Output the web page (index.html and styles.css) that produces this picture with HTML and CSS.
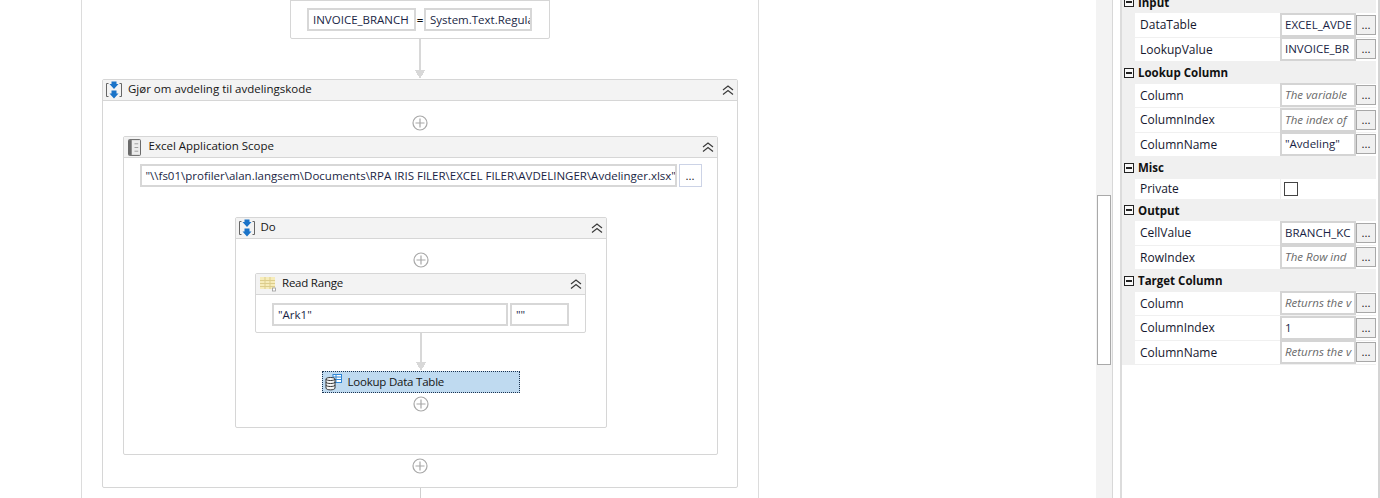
FILE: index.html
```html
<!DOCTYPE html>
<html lang="no">
<head>
<meta charset="utf-8">
<title>Workflow designer</title>
<link rel="stylesheet" href="styles.css">
</head>
<body>
<svg class="defs" width="0" height="0" aria-hidden="true">
  <defs>
    <symbol id="seq" viewBox="0 0 18 18">
      <path d="M3.500 2.500H1.500V15.500H3.500M14.500 2.500H16.500V15.500H14.500" fill="none" stroke="#666" stroke-width="1"/>
      <path d="M6.500 0.500H11.500V3H13.500L9 8L4.500 3H6.500Z" fill="#1a73c8"/>
      <path d="M6.500 9.500H11.500V12.500H13.500L9 17.500L4.500 12.500H6.500Z" fill="#1a73c8"/>
    </symbol>
    <symbol id="chev" viewBox="0 0 12 10">
      <path d="M1 5L6 1L11 5M1 9.500L6 5.500L11 9.500" fill="none" stroke="#3a3a3a" stroke-width="1.200"/>
    </symbol>
    <symbol id="plus" viewBox="0 0 16 16">
      <circle cx="8" cy="8" r="7" fill="#fff" stroke="#a8a8a8" stroke-width="1.200"/>
      <path d="M8 3.500V12.500M3.500 8H12.500" stroke="#a8a8a8" stroke-width="1.200"/>
    </symbol>
    <symbol id="book" viewBox="0 0 14 18">
      <rect x="0.500" y="0.500" width="13" height="17" rx="1" fill="#ececec" stroke="#5a5a5a"/>
      <rect x="1" y="1" width="3" height="16" fill="#6a6a6a"/>
      <path d="M7 5H11M7 9H11M7 13H11" stroke="#999"/>
    </symbol>
    <symbol id="range" viewBox="0 0 16 16">
      <rect x="0" y="1" width="15" height="12" fill="#f6ecba"/>
      <path d="M0 4.500H15M0 7.500H15M0 10.500H15M5 1V13M10 1V13" stroke="#dccd8c"/>
      <rect x="12.500" y="12" width="3" height="3" fill="#fff" stroke="#999" stroke-width="0.800"/>
    </symbol>
    <symbol id="lookup" viewBox="0 0 17 17">
      <rect x="8" y="0.500" width="8.500" height="8" fill="#fff" stroke="#2f86d6"/>
      <path d="M8 3H16.500M8 5.500H16.500M11 0.500V8.500" stroke="#2f86d6"/>
      <path d="M1 5C1 3 10 3 10 5V14C10 16.500 1 16.500 1 14Z" fill="#f6f6f6" stroke="#333"/>
      <path d="M1 5C1 7 10 7 10 5M1 8C1 10 10 10 10 8M1 11C1 13 10 13 10 11" fill="none" stroke="#333"/>
    </symbol>
  </defs>
</svg>

<div class="gutter"></div>

<main class="canvas">
  <section class="act assign">
    <div class="head head-cut"></div>
    <div class="assign-body">
      <span class="field f-to">INVOICE_BRANCH</span>
      <span class="eq">=</span>
      <span class="field f-val">System.Text.Regula</span>
    </div>
  </section>
  <div class="conn conn-a"><span class="arrow"></span></div>

  <section class="act outer">
    <header class="head">
      <svg class="ico i-seq"><use href="#seq"/></svg>
      <span class="title">Gjør om avdeling til avdelingskode</span>
      <svg class="chev"><use href="#chev"/></svg>
    </header>
    <div class="body body-outer">
      <svg class="plus p-top"><use href="#plus"/></svg>

      <section class="act excel">
        <header class="head">
          <svg class="ico i-book"><use href="#book"/></svg>
          <span class="title">Excel Application Scope</span>
          <svg class="chev"><use href="#chev"/></svg>
        </header>
        <div class="body body-excel">
          <div class="path-row">
            <span class="field f-path">"\\fs01\profiler\alan.langsem\Documents\RPA IRIS FILER\EXCEL FILER\AVDELINGER\Avdelinger.xlsx"</span>
            <span class="browse">...</span>
          </div>

          <section class="act do">
            <header class="head">
              <svg class="ico i-seq"><use href="#seq"/></svg>
              <span class="title">Do</span>
              <svg class="chev"><use href="#chev"/></svg>
            </header>
            <div class="body body-do">
              <svg class="plus p-do"><use href="#plus"/></svg>
              <section class="act read">
                <header class="head">
                  <svg class="ico i-range"><use href="#range"/></svg>
                  <span class="title t-tight">Read Range</span>
                  <svg class="chev"><use href="#chev"/></svg>
                </header>
                <div class="read-body">
                  <span class="field f-sheet">"Ark1"</span>
                  <span class="field f-range">""</span>
                </div>
              </section>
              <div class="conn conn-b"><span class="arrow"></span></div>
              <div class="lookup">
                <svg class="ico i-lookup"><use href="#lookup"/></svg>
                <span class="title t-tight">Lookup Data Table</span>
              </div>
              <svg class="plus p-low"><use href="#plus"/></svg>
            </div>
          </section>
        </div>
      </section>

      <svg class="plus p-bottom"><use href="#plus"/></svg>
    </div>
  </section>
  <div class="tail"></div>
</main>

<div class="blank"></div>

<div class="scrollbar"><div class="thumb"></div></div>
<div class="splitter"></div>

<aside class="panel">
  <div class="grid">
    <div class="band"><span class="toggle"></span>Input</div>
    <div class="row"><span class="name">DataTable</span><span class="value">EXCEL_AVDE</span><span class="more">...</span></div>
    <div class="row"><span class="name">LookupValue</span><span class="value">INVOICE_BR</span><span class="more">...</span></div>

    <div class="band"><span class="toggle"></span>Lookup Column</div>
    <div class="row"><span class="name">Column</span><span class="value hint">The variable</span><span class="more">...</span></div>
    <div class="row"><span class="name">ColumnIndex</span><span class="value hint">The index of</span><span class="more">...</span></div>
    <div class="row"><span class="name">ColumnName</span><span class="value">"Avdeling"</span><span class="more">...</span></div>

    <div class="band"><span class="toggle"></span>Misc</div>
    <div class="row row-short"><span class="name">Private</span><span class="check-cell"><span class="check"></span></span></div>

    <div class="band"><span class="toggle"></span>Output</div>
    <div class="row"><span class="name">CellValue</span><span class="value">BRANCH_KC</span><span class="more">...</span></div>
    <div class="row"><span class="name">RowIndex</span><span class="value hint">The Row ind</span><span class="more">...</span></div>

    <div class="band"><span class="toggle"></span>Target Column</div>
    <div class="row"><span class="name">Column</span><span class="value hint">Returns the v</span><span class="more">...</span></div>
    <div class="row"><span class="name">ColumnIndex</span><span class="value">1</span><span class="more">...</span></div>
    <div class="row"><span class="name">ColumnName</span><span class="value hint">Returns the v</span><span class="more">...</span></div>
  </div>
</aside>
</body>
</html>
```
FILE: styles.css
```css
* { box-sizing: border-box; }
html, body { margin: 0; padding: 0; }
body {
  width: 1380px;
  height: 498px;
  display: flex;
  overflow: hidden;
  background: #fff;
  font-family: "Open Sans", "Noto Sans", "Liberation Sans", sans-serif;
  font-size: 11.5px;
  color: #111;
}
.defs { position: absolute; }
svg { display: block; flex: none; }

.gutter { width: 81px; flex: none; }
.blank { width: 337px; flex: none; }

/* canvas */
.canvas {
  width: 678px;
  flex: none;
  height: 498px;
  border-left: 1px solid #dcdcdc;
  border-right: 1px solid #dcdcdc;
  display: flex;
  flex-direction: column;
  align-items: center;
  overflow: hidden;
}
.act {
  flex: none;
  background: #fff;
  border: 1px solid #d6d6d6;
  border-radius: 2px;
}
.head {
  height: 21px;
  display: flex;
  align-items: center;
  background: #f3f3f3;
  border-bottom: 1px solid #d6d6d6;
  padding: 0 3px 0 2px;
}
.head-cut { height: 2px; }
.title { flex: 1; white-space: nowrap; color: #151515; padding-bottom: 3px; }
.t-tight { letter-spacing: -0.22px; }
.lookup .title { padding-bottom: 2px; }
.chev { width: 12px; height: 10px; }
.ico { margin-right: 5px; }
.i-seq { width: 18px; height: 18px; }
.i-book { width: 13px; height: 17px; margin: 0 8px 0 2px; }
.i-range { width: 16px; height: 16px; margin: 0 6px 0 2px; }
.i-lookup { width: 17px; height: 17px; margin: 0 6px 0 2px; }

.field {
  display: block;
  flex: none;
  height: 23px;
  line-height: 19px;
  padding: 0 4px;
  background: #fff;
  border: 2px solid #d7d7d7;
  color: #1a1f45;
  white-space: nowrap;
  overflow: hidden;
}

/* assign */
.assign { width: 260px; height: 41px; margin-top: -2px; }
.assign-body { display: flex; align-items: center; padding: 7px 0 0 16px; }
.f-to { width: 109px; }
.eq { width: 8px; text-align: center; color: #111; font-weight: 600; }
.f-val { width: 108px; }

/* connectors */
.conn { display: flex; justify-content: center; flex: none; }
.conn-a { height: 40px; }
.conn-b { height: 38px; }
.arrow {
  display: block;
  width: 10px;
  height: 100%;
  background:
    linear-gradient(#d8d8d8, #d8d8d8) center top / 2px calc(100% - 8px) no-repeat,
    conic-gradient(from -30deg at 50% 100%, #d8d8d8 60deg, transparent 60deg) bottom / 10px 9px no-repeat;
}
.tail { width: 1px; height: 10px; flex: none; background: #cfcfcf; }

/* outer sequence */
.outer { width: 636px; height: 409px; }
.body { display: flex; flex-direction: column; align-items: center; }
.body-outer { padding-top: 14px; }
.plus { width: 16px; height: 16px; }
.p-top { margin-bottom: 5px; }
.p-bottom { margin-top: 3px; }

.excel { width: 595px; height: 319px; }
.body-excel { align-items: flex-start; padding: 6px 0 0 16px; }
.path-row { display: flex; gap: 2px; }
.f-path { width: 537px; }
.browse {
  width: 23px;
  height: 23px;
  line-height: 21px;
  text-align: center;
  border: 1px solid #ccd3e6;
  background: #fff;
  color: #222;
}

.do { width: 372px; height: 211px; margin: 30px 0 0 95px; }
.body-do { padding-top: 13px; }
.p-do { margin-bottom: 5px; }

.read { width: 331px; height: 60px; }
.read-body { display: flex; gap: 2px; padding: 8px 0 0 16px; }
.f-sheet { width: 236px; }
.f-range { width: 59px; }

.lookup {
  width: 198px;
  height: 22px;
  flex: none;
  display: flex;
  align-items: center;
  padding: 0 0 0 1px;
  background: #bfdaf0;
  outline: 1px dotted #1c3350;
  outline-offset: -1px;
}
.p-low { margin-top: 3px; }

/* scrollbar and splitter */
.scrollbar {
  width: 17px;
  flex: none;
  background: #f3f3f3;
  padding: 195px 1px 0;
  border-right: 1px solid #d8d8d8;
}
.thumb {
  height: 170px;
  background: #fff;
  border: 1px solid #a9a9a9;
}
.splitter { width: 9px; flex: none; border-right: 2px solid #dcdcdc; }

/* property panel */
.panel {
  width: 258px;
  flex: none;
  height: 498px;
  padding-right: 2px;
  border-right: 2px solid #d4d4d4;
  overflow: hidden;
}
.grid { margin-top: -8.5px; background: #f0f0f0; padding-left: 13px; }
.band {
  height: 21.5px;
  margin-left: -13px;
  display: flex;
  align-items: center;
  padding-left: 2px;
  font-weight: 700;
  background: #f0f0f0;
  color: #111;
}
.toggle {
  position: relative;
  width: 10px;
  height: 10px;
  margin-right: 4px;
  border: 1px solid #222;
  background: #f8f8f8;
  flex: none;
}
.toggle::after {
  content: "";
  position: absolute;
  left: 1px;
  right: 1px;
  top: 3px;
  height: 2px;
  background: #222;
}
.row {
  height: 24.5px;
  display: flex;
  align-items: center;
  background: #fff;
  border-bottom: 1px solid #f0f0f0;
}
.row-short { height: 21px; }
.name { width: 145px; flex: none; padding-left: 5px; color: #15172e; font-size: 12px; }
.value {
  width: 76px;
  height: 24px;
  flex: none;
  line-height: 20px;
  padding: 0 3px;
  border: 2px solid #d4d4d4;
  white-space: nowrap;
  overflow: hidden;
  color: #1a1f45;
}
.hint { font-style: italic; color: #6a6a6a; }
.more {
  width: 20px;
  height: 20px;
  flex: none;
  line-height: 18px;
  text-align: center;
  background: #f0f0f0;
  border: 1px solid #a8a8a8;
  color: #222;
}
.check-cell { flex: 1; height: 100%; display: flex; align-items: center; padding-left: 3px; border-left: 1px solid #f0f0f0; }
.check { width: 14px; height: 14px; background: #fff; border: 1px solid #444; }
```
